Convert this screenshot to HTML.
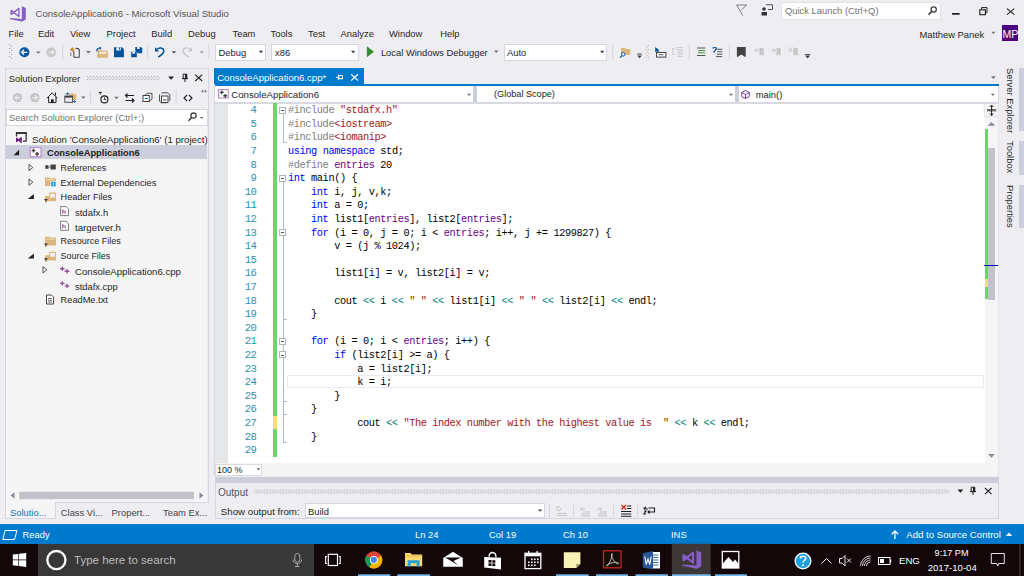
<!DOCTYPE html>
<html><head><meta charset="utf-8">
<style>
*{margin:0;padding:0;box-sizing:border-box}
html,body{width:1024px;height:576px;overflow:hidden;background:#EEEEF2;font-family:"Liberation Sans",sans-serif;font-size:9.4px;color:#1E1E1E}
.a{position:absolute}
.t{position:absolute;white-space:pre;line-height:1}
.code{position:absolute;left:288px;font-family:"Liberation Mono",monospace;font-size:10.3px;letter-spacing:-0.41px;white-space:pre;line-height:13.6px;height:13.6px;color:#000}
.ln{position:absolute;left:228px;width:28.3px;text-align:right;font-family:"Liberation Mono",monospace;font-size:10.6px;letter-spacing:-0.6px;line-height:13.6px;color:#2B91AF}
.kw{color:#0000FF}.st{color:#A31515}.pp{color:#808080}.mc{color:#6F008A}.op{color:#008080}
.tree{position:absolute;white-space:pre;line-height:14.7px;height:14.7px;font-size:9.4px;color:#1E1E1E}
</style></head><body>
<!-- TITLE BAR -->
<div class="t" style="left:35.5px;top:9px;font-size:9.6px;color:#555">ConsoleApplication6 - Microsoft Visual Studio</div>
<!-- MENU -->
<div class="t" style="left:8.5px;top:29px">File</div>
<div class="t" style="left:38px;top:29px">Edit</div>
<div class="t" style="left:70px;top:29px">View</div>
<div class="t" style="left:106.5px;top:29px">Project</div>
<div class="t" style="left:151.3px;top:29px">Build</div>
<div class="t" style="left:188px;top:29px">Debug</div>
<div class="t" style="left:232.5px;top:29px">Team</div>
<div class="t" style="left:270.5px;top:29px">Tools</div>
<div class="t" style="left:308px;top:29px">Test</div>
<div class="t" style="left:340.5px;top:29px">Analyze</div>
<div class="t" style="left:389px;top:29px">Window</div>
<div class="t" style="left:440.3px;top:29px">Help</div>
<div class="t" style="left:919.5px;top:29.5px">Matthew Panek</div>
<div class="a" style="left:1002px;top:25px;width:16.2px;height:15.8px;background:#4B0082;overflow:hidden"><div class="t" style="left:0.5px;top:3.5px;color:#fff;font-size:10.5px">MP</div></div>

<!-- QUICK LAUNCH -->
<div class="a" style="left:781px;top:1.5px;width:159.6px;height:18.7px;background:#fff;border:1px solid #E0E0E6"></div>
<div class="t" style="left:785px;top:6px;color:#717171">Quick Launch (Ctrl+Q)</div>

<!-- TOOLBAR COMBOS -->
<div class="a" style="left:214.5px;top:43.5px;width:51.8px;height:17px;background:#fff;border:1px solid #D4D6E2"></div>
<div class="t" style="left:218.5px;top:48px">Debug</div>
<div class="a" style="left:271.2px;top:43.5px;width:87.5px;height:17px;background:#fff;border:1px solid #D4D6E2"></div>
<div class="t" style="left:275px;top:48px">x86</div>
<div class="t" style="left:380.9px;top:48px">Local Windows Debugger</div>
<div class="a" style="left:503.9px;top:43.5px;width:103px;height:17px;background:#fff;border:1px solid #D4D6E2"></div>
<div class="t" style="left:507px;top:48px">Auto</div>

<!-- SOLUTION EXPLORER PANEL -->
<div class="a" style="left:4.6px;top:68.2px;width:204.4px;height:435px;border:1px solid #D4D6E2;background:#EEEEF2"></div>
<div class="t" style="left:8.8px;top:73.6px">Solution Explorer</div>
<div class="a" style="left:6px;top:109px;width:201.5px;height:17px;background:#fff;border:1px solid #D4D6E2"></div>
<div class="t" style="left:9px;top:113px;color:#717171">Search Solution Explorer (Ctrl+;)</div>
<div class="a" style="left:5.8px;top:126px;width:201.6px;height:376.4px;background:#F5F5F5"></div>
<div class="a" style="left:5.8px;top:144.5px;width:201.6px;height:14.9px;background:#CCCEDB"></div>
<div id="tree"><div class="t" style="left:32px;top:134.50px;font-size:9.68px;">Solution 'ConsoleApplication6' (1 project)</div>
<div class="t" style="left:46.9px;top:149.20px;font-weight:bold;font-size:9.33px;">ConsoleApplication6</div>
<div class="t" style="left:60.6px;top:163.90px;font-size:8.91px;">References</div>
<div class="t" style="left:60.6px;top:178.60px;font-size:9.28px;">External Dependencies</div>
<div class="t" style="left:60.6px;top:193.30px;font-size:9.09px;">Header Files</div>
<div class="t" style="left:75px;top:208.00px;font-size:9.47px;">stdafx.h</div>
<div class="t" style="left:75px;top:222.70px;font-size:9.72px;">targetver.h</div>
<div class="t" style="left:60.6px;top:237.40px;font-size:9.02px;">Resource Files</div>
<div class="t" style="left:60.6px;top:252.10px;font-size:8.95px;">Source Files</div>
<div class="t" style="left:75px;top:266.80px;font-size:9.63px;">ConsoleApplication6.cpp</div>
<div class="t" style="left:75px;top:281.50px;font-size:9.40px;">stdafx.cpp</div>
<div class="t" style="left:60.6px;top:296.20px;font-size:9.24px;">ReadMe.txt</div></div><!--endtree-->

<!-- EDITOR -->
<div class="a" style="left:214px;top:68px;width:150px;height:16px;background:#007ACC"></div>
<div class="t" style="left:217.2px;top:73px;color:#fff;font-size:9.57px">ConsoleApplication6.cpp*</div>
<div class="a" style="left:214.5px;top:84px;width:784.2px;height:2px;background:#007ACC"></div>
<div class="a" style="left:214.5px;top:86px;width:784.2px;height:16.8px;background:#fff;border-bottom:1px solid #D4D6E2"></div>
<div class="a" style="left:473.4px;top:86px;width:3.2px;height:16px;background:#CCCEDB"></div>
<div class="a" style="left:735.2px;top:86px;width:3.4px;height:16px;background:#CCCEDB"></div>
<div class="a" style="left:998px;top:86px;width:1px;height:17px;background:#D4D6E2"></div>
<div class="t" style="left:231.3px;top:90.3px;font-size:9.65px">ConsoleApplication6</div>
<div class="t" style="left:494px;top:90.3px;font-size:9.13px">(Global Scope)</div>
<div class="t" style="left:755.7px;top:90.3px">main()</div>

<div class="a" style="left:214.5px;top:102.8px;width:784.2px;height:359.8px;background:#fff"></div>
<div class="a" style="left:214.5px;top:102.8px;width:13.5px;height:359.8px;background:#E6E7E8"></div>
<div class="a" style="left:984.5px;top:102.8px;width:14px;height:373.6px;background:#F5F5F5"></div>
<div class="a" style="left:214.5px;top:462.6px;width:770px;height:13.8px;background:#F5F5F5"></div>
<div class="a" style="left:214.8px;top:463.5px;width:47.2px;height:12.2px;background:#fff;border:1px solid #DADBE3"></div>
<div class="t" style="left:217px;top:466px;font-size:9px">100 %</div>
<div class="a" style="left:214.5px;top:476.5px;width:784.2px;height:6px;background:#CCCEDB"></div>
<div class="a" style="left:214px;top:86px;width:1px;height:390.4px;background:#D4D6E2"></div>
<div class="a" style="left:214.5px;top:102px;width:784px;height:1.6px;background:#D8D9E2"></div>
<div id="code"><div class="a" style="left:287px;top:374.80px;width:697px;height:13.6px;border:1px solid #EAEAF2"></div>
<div class="ln" style="top:104.10px">4</div>
<div class="code" style="top:104.20px"><span class="pp">#include</span> <span class="st">"stdafx.h"</span></div>
<div class="ln" style="top:117.70px">5</div>
<div class="code" style="top:117.80px"><span class="pp">#include</span><span class="st">&lt;iostream&gt;</span></div>
<div class="ln" style="top:131.30px">6</div>
<div class="code" style="top:131.40px"><span class="pp">#include</span><span class="st">&lt;iomanip&gt;</span></div>
<div class="ln" style="top:144.90px">7</div>
<div class="code" style="top:145.00px"><span class="kw">using</span> <span class="kw">namespace</span> std;</div>
<div class="ln" style="top:158.50px">8</div>
<div class="code" style="top:158.60px"><span class="pp">#define</span> <span class="mc">entries</span> 20</div>
<div class="ln" style="top:172.10px">9</div>
<div class="code" style="top:172.20px"><span class="kw">int</span> main() {</div>
<div class="ln" style="top:185.70px">10</div>
<div class="code" style="top:185.80px">    <span class="kw">int</span> i, j, v,k;</div>
<div class="ln" style="top:199.30px">11</div>
<div class="code" style="top:199.40px">    <span class="kw">int</span> a = 0;</div>
<div class="ln" style="top:212.90px">12</div>
<div class="code" style="top:213.00px">    <span class="kw">int</span> list1[<span class="mc">entries</span>], list2[<span class="mc">entries</span>];</div>
<div class="ln" style="top:226.50px">13</div>
<div class="code" style="top:226.60px">    <span class="kw">for</span> (i = 0, j = 0; i &lt; <span class="mc">entries</span>; i++, j += 1299827) {</div>
<div class="ln" style="top:240.10px">14</div>
<div class="code" style="top:240.20px">        v = (j % 1024);</div>
<div class="ln" style="top:253.70px">15</div>
<div class="code" style="top:253.80px"></div>
<div class="ln" style="top:267.30px">16</div>
<div class="code" style="top:267.40px">        list1[i] = v, list2[i] = v;</div>
<div class="ln" style="top:280.90px">17</div>
<div class="code" style="top:281.00px"></div>
<div class="ln" style="top:294.50px">18</div>
<div class="code" style="top:294.60px">        cout <span class="op">&lt;&lt;</span> i <span class="op">&lt;&lt;</span> <span class="st">" "</span> <span class="op">&lt;&lt;</span> list1[i] <span class="op">&lt;&lt;</span> <span class="st">" "</span> <span class="op">&lt;&lt;</span> list2[i] <span class="op">&lt;&lt;</span> endl;</div>
<div class="ln" style="top:308.10px">19</div>
<div class="code" style="top:308.20px">    }</div>
<div class="ln" style="top:321.70px">20</div>
<div class="code" style="top:321.80px"></div>
<div class="ln" style="top:335.30px">21</div>
<div class="code" style="top:335.40px">    <span class="kw">for</span> (i = 0; i &lt; <span class="mc">entries</span>; i++) {</div>
<div class="ln" style="top:348.90px">22</div>
<div class="code" style="top:349.00px">        <span class="kw">if</span> (list2[i] &gt;= a) {</div>
<div class="ln" style="top:362.50px">23</div>
<div class="code" style="top:362.60px">            a = list2[i];</div>
<div class="ln" style="top:376.10px">24</div>
<div class="code" style="top:376.20px">            k = i;</div>
<div class="ln" style="top:389.70px">25</div>
<div class="code" style="top:389.80px">        }</div>
<div class="ln" style="top:403.30px">26</div>
<div class="code" style="top:403.40px">    }</div>
<div class="ln" style="top:416.90px">27</div>
<div class="code" style="top:417.00px">            cout <span class="op">&lt;&lt;</span> <span class="st">"The index number with the highest value is  "</span> <span class="op">&lt;&lt;</span> k <span class="op">&lt;&lt;</span> endl;</div>
<div class="ln" style="top:430.50px">28</div>
<div class="code" style="top:430.60px">    }</div>
<div class="ln" style="top:444.10px">29</div>
<div class="code" style="top:444.20px"></div>
<div class="a" style="left:273px;top:102.80px;width:4.2px;height:354.20px;background:#6BD46B"></div>
<div class="a" style="left:273px;top:415.60px;width:4.2px;height:13.60px;background:#F5E26B"></div>
<div class="a" style="left:283px;top:113.60px;width:1px;height:29.73px;background:#B8B8B8"></div><div class="a" style="left:283px;top:142.33px;width:3.5px;height:1px;background:#B8B8B8"></div>
<div class="a" style="left:283px;top:181.60px;width:1px;height:260.93px;background:#B8B8B8"></div><div class="a" style="left:283px;top:441.53px;width:3.5px;height:1px;background:#B8B8B8"></div>
<div class="a" style="left:283px;top:236.00px;width:1px;height:84.13px;background:#B8B8B8"></div><div class="a" style="left:283px;top:319.13px;width:3.5px;height:1px;background:#B8B8B8"></div>
<div class="a" style="left:283px;top:344.80px;width:1px;height:70.53px;background:#B8B8B8"></div><div class="a" style="left:283px;top:414.33px;width:3.5px;height:1px;background:#B8B8B8"></div>
<div class="a" style="left:283px;top:358.40px;width:1px;height:43.33px;background:#B8B8B8"></div><div class="a" style="left:283px;top:400.73px;width:3.5px;height:1px;background:#B8B8B8"></div>
<div class="a" style="left:279.4px;top:106.60px;width:7px;height:7px;border:1px solid #B4B4B4;background:#fff"><div class="a" style="left:1px;top:2.2px;width:3px;height:1px;background:#555"></div></div>
<div class="a" style="left:279.4px;top:174.60px;width:7px;height:7px;border:1px solid #B4B4B4;background:#fff"><div class="a" style="left:1px;top:2.2px;width:3px;height:1px;background:#555"></div></div>
<div class="a" style="left:279.4px;top:229.00px;width:7px;height:7px;border:1px solid #B4B4B4;background:#fff"><div class="a" style="left:1px;top:2.2px;width:3px;height:1px;background:#555"></div></div>
<div class="a" style="left:279.4px;top:337.80px;width:7px;height:7px;border:1px solid #B4B4B4;background:#fff"><div class="a" style="left:1px;top:2.2px;width:3px;height:1px;background:#555"></div></div>
<div class="a" style="left:279.4px;top:351.40px;width:7px;height:7px;border:1px solid #B4B4B4;background:#fff"><div class="a" style="left:1px;top:2.2px;width:3px;height:1px;background:#555"></div></div></div><!--endcode-->


<!-- EDITOR SCROLLBAR MARKERS -->
<div class="a" style="left:984.8px;top:128.8px;width:3.6px;height:170px;background:#6BD46B"></div>
<div class="a" style="left:984.8px;top:278.5px;width:3.6px;height:8.3px;background:#F5E26B"></div>
<div class="a" style="left:988.4px;top:148px;width:6.3px;height:151.7px;background:#C2C3C9"></div>
<div class="a" style="left:984px;top:265px;width:14px;height:1.3px;background:#0000D0"></div>
<div class="a" style="left:998px;top:102.8px;width:1px;height:373.6px;background:#E4E5EC"></div>

<!-- RIGHT STRIP -->
<div class="a" style="left:1019.3px;top:68px;width:4.7px;height:63px;background:#CCCEDB"></div>
<div class="a" style="left:1019.3px;top:140.8px;width:4.7px;height:33.8px;background:#CCCEDB"></div>
<div class="a" style="left:1019.3px;top:184.6px;width:4.7px;height:43.4px;background:#CCCEDB"></div>
<div class="t" style="left:1014.5px;top:68px;transform-origin:0 0;transform:rotate(90deg);font-size:9.4px;color:#1E1E1E">Server Explorer</div>
<div class="t" style="left:1014.5px;top:141px;transform-origin:0 0;transform:rotate(90deg);font-size:9.4px;color:#1E1E1E">Toolbox</div>
<div class="t" style="left:1014.5px;top:184.6px;transform-origin:0 0;transform:rotate(90deg);font-size:9.4px;color:#1E1E1E">Properties</div>

<!-- SE BOTTOM TABS -->
<div class="a" style="left:4.8px;top:503px;width:50.8px;height:16px;background:#F5F5F5;border:1px solid #D4D6E2;border-top:none"></div>
<div class="a" style="left:5.6px;top:501px;width:49px;height:3px;background:#F5F5F5"></div>
<div class="t" style="left:10px;top:507.5px;color:#0E70C0">Solutio...</div>
<div class="t" style="left:60.8px;top:507.5px;color:#444">Class Vi...</div>
<div class="t" style="left:111.6px;top:507.5px;color:#444">Propert...</div>
<div class="t" style="left:163px;top:507.5px;color:#444">Team Ex...</div>

<!-- OUTPUT -->
<div class="a" style="left:214.5px;top:482.4px;width:784.2px;height:37px;border:1px solid #D4D6E2;border-top:none"></div>
<div class="t" style="left:218px;top:487.5px;color:#555;font-size:10px">Output</div>
<div class="t" style="left:220.8px;top:506.5px;font-size:9.73px">Show output from:</div>
<div class="a" style="left:304.7px;top:502.8px;width:240px;height:15.5px;background:#fff;border:1px solid #D4D6E2"></div>
<div class="t" style="left:308px;top:507px">Build</div>

<!-- STATUS BAR -->
<div class="a" style="left:0;top:524.4px;width:1024px;height:19.4px;background:#007ACC"></div>
<div class="t" style="left:22.6px;top:529.5px;color:#fff">Ready</div>
<div class="t" style="left:415px;top:529.5px;color:#fff">Ln 24</div>
<div class="t" style="left:489px;top:529.5px;color:#fff">Col 19</div>
<div class="t" style="left:563px;top:529.5px;color:#fff">Ch 10</div>
<div class="t" style="left:671px;top:529.5px;color:#fff">INS</div>
<div class="t" style="left:906.3px;top:529.5px;color:#fff;font-size:9.62px">Add to Source Control</div>

<!-- TASKBAR -->
<div class="a" style="left:0;top:543.8px;width:1024px;height:32.2px;background:#130709"></div>
<div class="a" style="left:38px;top:543.8px;width:276px;height:32.2px;background:#383838"></div>
<div class="t" style="left:74px;top:554.5px;color:#BDBDBD;font-size:11.5px">Type here to search</div>
<svg class="a" style="left:0;top:0" width="1024" height="576" viewBox="0 0 1024 576">
<!-- VS logo title -->
<g fill="#865FC5">
<path d="M21.8,6.3 L25.8,8 L25.8,19.6 L21.8,21.6 Z"/>
<path d="M10,18.1 L22,18.9 L25.8,19.6 L21.8,21.6 L10,19.2 Z"/>
</g>
<path d="M11.2,10.4 L11.2,14.4 L18.9,8.5 L18.9,16.5 Z" fill="none" stroke="#865FC5" stroke-width="1.35" stroke-linejoin="round"/>
<!-- filter icon -->
<path d="M736.2,5 L746.7,5 L741.3,10 M736.8,5.3 L742.7,15.5" fill="none" stroke="#717171" stroke-width="0.9"/>
<!-- feedback -->
<circle cx="764" cy="9" r="1.8" fill="#333"/>
<path d="M761.5,12 L767,12 L767,15.5 L761.5,15.5 Z" fill="#333"/>
<path d="M766,4.7 L772.5,4.7 L772.5,9.5 L768,9.5" fill="none" stroke="#555" stroke-width="1"/>
<!-- quick launch search -->
<circle cx="933.7" cy="9.4" r="2.6" fill="none" stroke="#424242" stroke-width="1.3"/>
<path d="M931.8,11.4 L928.6,14.6" stroke="#424242" stroke-width="1.6"/>
<!-- window buttons -->
<rect x="952" y="13" width="7.6" height="1.7" fill="#1E1E1E"/>
<path d="M981.5,9.5 L981.5,7.6 L987,7.6 L987,12.6 L985.5,12.6" fill="none" stroke="#1E1E1E" stroke-width="1"/>
<rect x="979.8" y="9.8" width="5.6" height="4.9" fill="none" stroke="#1E1E1E" stroke-width="1.1"/>
<path d="M1007,8.6 L1014.3,14.6 M1014.3,8.6 L1007,14.6" stroke="#1E1E1E" stroke-width="1.1"/>
<!-- user dropdown -->
<path d="M991.2,31.8 L995.4,31.8 L993.3,34 Z" fill="#717171"/>
<!-- toolbar grip -->
<g fill="#A0A0A8"><rect x="9" y="44" width="1" height="1"/><rect x="11" y="46" width="1" height="1"/><rect x="9" y="48" width="1" height="1"/><rect x="11" y="50" width="1" height="1"/><rect x="9" y="52" width="1" height="1"/><rect x="11" y="54" width="1" height="1"/><rect x="9" y="56" width="1" height="1"/><rect x="11" y="58" width="1" height="1"/></g>
<!-- back/forward -->
<circle cx="24.4" cy="52.3" r="5" fill="#00539C"/>
<path d="M27.3,52.3 L21.5,52.3 M24,49.8 L21.5,52.3 L24,54.8" fill="none" stroke="#fff" stroke-width="1.3"/>
<path d="M36,51.5 L40.5,51.5 L38.25,53.8 Z" fill="#717171"/>
<circle cx="51.2" cy="52.3" r="4.8" fill="#C6C6C6"/>
<path d="M48.5,52.3 L54,52.3 M51.5,49.8 L54,52.3 L51.5,54.8" fill="none" stroke="#EEEEF2" stroke-width="1.2"/>
<rect x="62.3" y="44.5" width="0.8" height="15.5" fill="#CCCEDB"/>
<!-- new project -->
<path d="M73.8,51 L73.8,57.3 L79.3,57.3 L79.3,51" fill="none" stroke="#333" stroke-width="0.9"/>
<path d="M75.5,48.6 C77.5,47.8 79.6,48.8 79.3,51.2" fill="none" stroke="#333" stroke-width="1.1"/>
<path d="M70.9,52.5 L70.9,56.2" stroke="#555" stroke-width="0.8"/>
<path d="M72.3,47.2 L72.3,51.8 M70,49.5 L74.6,49.5 M70.7,47.9 L73.9,51.1 M73.9,47.9 L70.7,51.1" stroke="#D0821A" stroke-width="0.8"/>
<circle cx="72.3" cy="49.5" r="0.9" fill="#D0821A"/>
<path d="M85.8,51 L91,51 L88.4,53.6 Z" fill="#717171"/>
<!-- open folder -->
<path d="M97.5,49.5 L101.5,49.5 L102.5,50.5 L107.8,50.5 L107.8,57.6 L97.5,57.6 Z" fill="#DCB67A"/>
<rect x="99" y="51.5" width="7.5" height="3" fill="#EFE3CB"/>
<path d="M97.3,54 L107.8,54 L107.8,57.6 L97.3,57.6 Z" fill="#DCB67A"/>
<path d="M96.8,51.5 C96.5,49 98,47.8 100.5,48" fill="none" stroke="#00539C" stroke-width="1.1"/>
<path d="M99.6,46.6 L101.6,48 L99.6,49.4 Z" fill="#00539C"/>
<!-- save -->
<path d="M114,47.3 L122,47.3 L123.9,49.2 L123.9,57.2 L114,57.2 Z" fill="#00539C"/>
<rect x="116.3" y="47.3" width="4.6" height="3.2" fill="#EEEEF2"/><rect x="119" y="47.6" width="1.1" height="2" fill="#00539C"/>
<!-- save all -->
<path d="M135.3,47 L141,47 L142.2,48.2 L142.2,53.2 L135.3,53.2 Z" fill="#00539C"/>
<rect x="137" y="47" width="2.8" height="1.9" fill="#EEEEF2"/>
<path d="M130.9,51.6 L136,51.6 L137.1,52.7 L137.1,57.6 L130.9,57.6 Z" fill="#00539C" stroke="#EEEEF2" stroke-width="0.6"/>
<rect x="132.3" y="51.9" width="2.6" height="1.8" fill="#EEEEF2"/>
<rect x="147.3" y="44.7" width="0.8" height="14.7" fill="#CCCEDB"/>
<!-- undo/redo -->
<path d="M156.5,49.5 C159,47 163.5,47.5 163.8,50.8 C164,53 161,55.5 158.2,57.2" fill="none" stroke="#00539C" stroke-width="1.5"/>
<path d="M155,47.3 L155,51.5 L159.2,51.5 Z" fill="#00539C"/>
<path d="M171.7,51.2 L176.1,51.2 L173.9,53.6 Z" fill="#424242"/>
<path d="M190.5,49.5 C188,47 183.5,47.5 183.2,50.8 C183,53 186,55.5 188.8,57.2" fill="none" stroke="#C6C6C6" stroke-width="1.4"/>
<path d="M192,47.3 L192,51.5 L187.8,51.5 Z" fill="#C6C6C6"/>
<path d="M199.5,51.2 L204,51.2 L201.75,53.6 Z" fill="#A0A0A0"/>
<rect x="208.5" y="44.7" width="0.8" height="14.7" fill="#CCCEDB"/>
<!-- combo arrows -->
<path d="M258.8,50.8 L263.2,50.8 L261,53.2 Z" fill="#424242"/>
<path d="M351,50.8 L355.4,50.8 L353.2,53.2 Z" fill="#424242"/>
<path d="M366.9,46.3 L374,51.8 L366.9,57.3 Z" fill="#388A34"/>
<path d="M494,50.5 L498.4,50.5 L496.2,52.9 Z" fill="#717171"/>
<path d="M600,50.8 L604.4,50.8 L602.2,53.2 Z" fill="#424242"/>
<rect x="612.3" y="44.7" width="0.8" height="14.7" fill="#CCCEDB"/>
<!-- find in files -->
<path d="M621,48 L625,48 L626,49 L630.2,49 L630.2,55 L621,55 Z" fill="#DCB67A"/>
<circle cx="623.3" cy="54.3" r="1.8" fill="#fff" stroke="#00539C" stroke-width="1"/>
<path d="M622,55.6 L620,57.6" stroke="#00539C" stroke-width="1.2"/>
<rect x="637.1" y="53.6" width="4.9" height="0.9" fill="#424242"/>
<path d="M637.1,55.4 L642,55.4 L639.55,58.2 Z" fill="#424242"/>
<g fill="#B8B8C0"><rect x="645.5" y="45" width="1" height="1"/><rect x="648" y="45" width="1" height="1"/><rect x="646.7" y="47" width="1" height="1"/><rect x="645.5" y="49" width="1" height="1"/><rect x="648" y="49" width="1" height="1"/><rect x="646.7" y="51" width="1" height="1"/><rect x="645.5" y="53" width="1" height="1"/><rect x="648" y="53" width="1" height="1"/><rect x="646.7" y="55" width="1" height="1"/><rect x="645.5" y="57" width="1" height="1"/><rect x="648" y="57" width="1" height="1"/></g>
<path d="M655.2,47 L655.2,52.5 L656.6,51.2 L658.2,53 L659.2,52.4 L657.8,50.6 L659.8,50.4 Z" fill="#00539C"/>
<rect x="656.5" y="52.5" width="9.4" height="4.6" fill="#fff" stroke="#424242" stroke-width="1"/>
<rect x="658.5" y="54.3" width="5" height="0.9" fill="#424242"/>
<g fill="none" stroke="#C6C6C6" stroke-width="0.9"><path d="M674.5,48.5 L672.8,48.5 L672.8,54.5 L674.5,54.5"/><path d="M676.5,47.6 L683,47.6 M676.5,49.8 L683,49.8 M677.5,52 L683,52 M677.5,54.2 L683,54.2 M677.5,56.4 L683,56.4"/></g>
<rect x="688.8" y="44.7" width="0.8" height="14.7" fill="#CCCEDB"/>
<!-- comment -->
<g stroke-width="0.9"><path d="M697,48 L705.3,48 M697,55.5 L705.3,55.5" stroke="#424242"/><path d="M698,50.5 L705.3,50.5 M698,52.8 L705.3,52.8" stroke="#388A34"/></g>
<path d="M712.5,48.3 C714,47 715.5,47.5 716.5,48 C716,50 714.5,51 713.5,52.5" fill="none" stroke="#00539C" stroke-width="1.2"/>
<g stroke="#424242" stroke-width="0.9"><path d="M717,49.3 L722.3,49.3 M717,51.8 L722.3,51.8 M717,54.3 L722.3,54.3 M716,56.6 L722.3,56.6"/></g>
<rect x="729.2" y="44.7" width="0.8" height="14.7" fill="#CCCEDB"/>
<path d="M736.9,47 L745.7,47 L745.7,57.2 L741.3,54.6 L736.9,57.2 Z" fill="#424242"/>
<g fill="#C6C6C6"><path d="M759.5,48 L763.7,48 L763.7,56 L761.6,54.5 L759.5,56 Z"/><path d="M776.5,48 L780.7,48 L780.7,56 L778.6,54.5 L776.5,56 Z"/><path d="M793.5,48 L797.7,48 L797.7,56 L795.6,54.5 L793.5,56 Z"/></g>
<g fill="none" stroke="#C6C6C6" stroke-width="1"><path d="M759,50.3 L755,50.3 M757,48.3 L755,50.3 L757,52.3"/><path d="M771.3,50.3 L775.5,50.3 M773.5,48.3 L775.5,50.3 L773.5,52.3"/><path d="M788.3,47.3 L792.5,52 M792.5,47.3 L788.3,52"/></g>
<rect x="805" y="54" width="5.2" height="0.9" fill="#424242"/>
<path d="M805,55.6 L810.2,55.6 L807.6,58.5 Z" fill="#424242"/>
</svg>
<svg class="a" style="left:0;top:0" width="1024" height="576" viewBox="0 0 1024 576">
<!-- SE header grip -->
<defs><pattern id="grip" x="87" y="76" width="3.2" height="3" patternUnits="userSpaceOnUse"><rect x="0" y="0" width="1.1" height="1.1" fill="#9A9A9A"/><rect x="1.6" y="1.5" width="1.1" height="1.1" fill="#9A9A9A"/></pattern></defs>
<rect x="87" y="76" width="73" height="4.2" fill="url(#grip)" opacity="0.85"/>
<path d="M168.2,76.6 L174,76.6 L171.1,79.8 Z" fill="#1E1E1E"/>
<path d="M183.2,74.2 L186.8,74.2 L186.8,78.6 L183.2,78.6 Z M182,78.6 L188,78.6 M185,78.6 L185,82" fill="none" stroke="#1E1E1E" stroke-width="1"/>
<rect x="185" y="74.2" width="1.8" height="4.4" fill="#1E1E1E"/>
<path d="M195.2,74.6 L202.2,81 M202.2,74.6 L195.2,81" stroke="#1E1E1E" stroke-width="1.1"/>
<!-- SE toolbar -->
<circle cx="17.5" cy="97.6" r="4.7" fill="#C6C6C6"/>
<path d="M20,97.6 L15,97.6 M17.2,95.4 L15,97.6 L17.2,99.8" fill="none" stroke="#EEEEF2" stroke-width="1.1"/>
<circle cx="34.9" cy="97.6" r="4.7" fill="#C6C6C6"/>
<path d="M32.4,97.6 L37.4,97.6 M35.2,95.4 L37.4,97.6 L35.2,99.8" fill="none" stroke="#EEEEF2" stroke-width="1.1"/>
<path d="M47,98.2 L52.2,92.8 L57.4,98.2 M48.6,97 L48.6,102.6 L56,102.6 L56,97" fill="none" stroke="#1E1E1E" stroke-width="1"/>
<rect x="51" y="99.3" width="2.6" height="3.3" fill="#1E1E1E"/>
<rect x="55" y="92.5" width="1" height="3" fill="#1E1E1E"/>
<path d="M69,93.5 L73.5,93.5 L74.2,94.3 L76.4,94.3 L76.4,100 L69,100 Z" fill="#DCB67A"/>
<rect x="64.8" y="96" width="7.8" height="6.3" fill="#E8E8EC" stroke="#424242" stroke-width="0.9"/>
<rect x="64.8" y="96" width="7.8" height="1.6" fill="#424242"/>
<path d="M65.5,93.8 L68.5,93.8 M67,92.5 L68.5,93.8 L67,95" fill="none" stroke="#00539C" stroke-width="0.9"/>
<path d="M76,101.5 L73.5,101.5 M74.8,100.3 L73.5,101.5 L74.8,102.7" fill="none" stroke="#00539C" stroke-width="0.9"/>
<path d="M81.2,96.5 L85.6,96.5 L83.4,98.9 Z" fill="#717171"/>
<rect x="90.3" y="90" width="0.8" height="14" fill="#CCCEDB"/>
<path d="M98.8,92.4 L101.8,92.4 M100.3,92.4 L100.3,94.6" stroke="#1E1E1E" stroke-width="1"/>
<circle cx="104.4" cy="99.4" r="3.5" fill="none" stroke="#1E1E1E" stroke-width="1.1"/>
<path d="M104.4,97.4 L104.4,99.6 L106.2,99.6" fill="none" stroke="#1E1E1E" stroke-width="0.9"/>
<path d="M114.3,96.8 L118.7,96.8 L116.5,99.2 Z" fill="#717171"/>
<path d="M125.5,95.5 L134,95.5 M127.5,93.5 L125.5,95.5 L127.5,97.5 M125.5,100.5 L134,100.5 M132,98.5 L134,100.5 L132,102.5" fill="none" stroke="#1E1E1E" stroke-width="1.2"/>
<rect x="143" y="95.5" width="6.3" height="6" fill="#fff" stroke="#424242" stroke-width="1"/>
<rect x="144.8" y="98" width="2.8" height="1" fill="#00539C"/>
<path d="M145,95.5 L147,93.3 L152,93.3 L152,99 L149.3,101.5" fill="none" stroke="#424242" stroke-width="0.9"/>
<path d="M159.5,94.5 L159.5,101 L161,102.8 L166.5,102.8 M161.5,92.8 L168,92.8 L169.8,94.6 L169.8,101" fill="none" stroke="#424242" stroke-width="0.9"/>
<rect x="161.5" y="96" width="6.5" height="6.5" fill="#fff" stroke="#424242" stroke-width="1"/>
<rect x="163" y="99.5" width="3.5" height="1" fill="#424242"/>
<rect x="175.7" y="90" width="0.8" height="14" fill="#CCCEDB"/>
<path d="M187,95 L184,98 L187,101 M189,95 L192,98 L189,101" fill="none" stroke="#1E1E1E" stroke-width="1.1"/>
<path d="M201.8,89.6 L204,91.3 L201.8,93 Z M204.8,89.6 L207,91.3 L204.8,93 Z" fill="#717171"/>
<!-- search icon SE -->
<circle cx="193.5" cy="115.6" r="2.6" fill="none" stroke="#424242" stroke-width="1.3"/>
<path d="M191.6,117.6 L188.5,120.7" stroke="#424242" stroke-width="1.6"/>
<path d="M199.8,117 L203.6,117 L201.7,119 Z" fill="#717171"/>
<!-- tree icons -->
<path d="M16.5,136.5 L16.5,132.9 L26.1,132.9 L26.1,141.1 L23,141.1" fill="none" stroke="#333" stroke-width="1.3"/>
<rect x="16" y="132.2" width="10.8" height="1.8" fill="#333"/>
<path d="M16.7,138.3 L16.7,141.5 L21.2,137.8 L21.2,142.3 Z" fill="none" stroke="#68217A" stroke-width="1.3" stroke-linejoin="round"/>
<path d="M13.6,155.2 L19.1,149.7 L19.1,155.2 Z" fill="#1E1E1E"/>
<rect x="30.2" y="147.8" width="10.8" height="9" fill="#fff" stroke="#B678C4" stroke-width="1"/>
<path d="M31.6,150.6 L35.4,150.6 M33.5,148.7 L33.5,152.5 M35.2,154 L39,154 M37.1,152.1 L37.1,155.9" fill="none" stroke="#424242" stroke-width="1.4"/>
<path d="M29,164.3 L32.8,167.5 L29,170.7 Z" fill="none" stroke="#424242" stroke-width="0.9"/>
<rect x="45.3" y="165.2" width="3.2" height="3.6" fill="#424242"/><rect x="49" y="166.6" width="1" height="1" fill="#424242"/><rect x="50.5" y="164.5" width="5.3" height="5" fill="#424242"/>
<path d="M29,178.9 L32.8,182.1 L29,185.3 Z" fill="none" stroke="#424242" stroke-width="0.9"/>
<path d="M45,177.5 L49.5,177.5 L50.3,178.3 L56,178.3 L56,186 L45,186 Z" fill="#DCB67A"/>
<rect x="46.5" y="179.2" width="8" height="1" fill="#F5E1B8"/>
<rect x="50.8" y="181.3" width="5.2" height="5.5" fill="#1BA1E2" stroke="#fff" stroke-width="0.6"/>
<path d="M52.4,182.6 L54,184 L52.4,185.4" fill="none" stroke="#fff" stroke-width="0.7"/>
<!-- header files -->
<path d="M27.8,199.1 L33.9,194.1 L33.9,199.1 Z" fill="#1E1E1E"/>
<path d="M49,192.6 L56,192.6 L56,201.2 L45,201.2 L45,196 L49,196 Z" fill="#DCB67A"/>
<path d="M50,193.8 L55,193.8 L55,197.5 L50,197.5 Z" fill="#F0F0F0"/>
<path d="M44.3,199.6 L47.5,199.6 M45.9,199.6 L45.9,202.3" stroke="#1E1E1E" stroke-width="0.9"/>
<g>
<path d="M60.6,206.6 L66,206.6 L68.5,209 L68.5,215.6 L60.6,215.6 Z" fill="#fff" stroke="#717171" stroke-width="0.9"/>
<path d="M62.8,209.2 L62.8,213.8 M62.8,211.3 L65.2,211.3 L65.2,213.8" fill="none" stroke="#9B4F96" stroke-width="1"/>
<path d="M60.6,221.3 L66,221.3 L68.5,223.7 L68.5,230.3 L60.6,230.3 Z" fill="#fff" stroke="#717171" stroke-width="0.9"/>
<path d="M62.8,223.9 L62.8,228.5 M62.8,226 L65.2,226 L65.2,228.5" fill="none" stroke="#9B4F96" stroke-width="1"/>
</g>
<!-- resource folder -->
<path d="M45,236.8 L49.5,236.8 L50.3,237.6 L56,237.6 L56,245.6 L45,245.6 Z" fill="#DCB67A"/>
<rect x="46.3" y="238.6" width="8.5" height="1" fill="#F5E1B8"/>
<path d="M44.3,244 L47.5,244 M45.9,244 L45.9,246.7" stroke="#1E1E1E" stroke-width="0.9"/>
<!-- source files -->
<path d="M27.8,258.5 L33.9,253.5 L33.9,258.5 Z" fill="#1E1E1E"/>
<path d="M49,251.8 L56,251.8 L56,260.4 L45,260.4 L45,255.2 L49,255.2 Z" fill="#DCB67A"/>
<path d="M50,253 L55,253 L55,256.7 L50,256.7 Z" fill="#F0F0F0"/>
<path d="M44.3,258.8 L47.5,258.8 M45.9,258.8 L45.9,261.5" stroke="#1E1E1E" stroke-width="0.9"/>
<path d="M43,266.6 L46.8,269.8 L43,273 Z" fill="none" stroke="#424242" stroke-width="0.9"/>
<g stroke="#9B4F96" stroke-width="1.4"><path d="M60,268.7 L64.6,268.7 M62.3,266.6 L62.3,270.8 M64.6,271.2 L69.4,271.2 M67,269 L67,273.4"/>
<path d="M60,283.4 L64.6,283.4 M62.3,281.3 L62.3,285.5 M64.6,285.9 L69.4,285.9 M67,283.7 L67,288.1"/></g>
<path d="M46.5,295 L51.5,295 L53.6,297.2 L53.6,304 L46.5,304 Z" fill="#fff" stroke="#424242" stroke-width="1"/>
<path d="M48,298.5 L52,298.5 M48,300.3 L52,300.3 M48,302.1 L52,302.1" stroke="#424242" stroke-width="0.8"/>
</svg>
<svg class="a" style="left:0;top:0" width="1024" height="576" viewBox="0 0 1024 576">
<!-- tab icons -->
<path d="M336,77.4 L338.5,77.4 M338.4,74.6 L338.4,80" stroke="#fff" stroke-width="0.9" fill="none"/>
<rect x="338.9" y="75.6" width="3.6" height="3.2" fill="none" stroke="#fff" stroke-width="0.9"/>
<rect x="338.9" y="78" width="3.6" height="1" fill="#fff"/>
<path d="M351.2,74.2 L358,80.6 M358,74.2 L351.2,80.6" stroke="#fff" stroke-width="1.2"/>
<path d="M991,76.3 L995.8,76.3 L993.4,79 Z" fill="#717171"/>
<!-- nav icons -->
<rect x="218.6" y="89.6" width="9.6" height="8.4" fill="#fff" stroke="#B678C4" stroke-width="1"/>
<path d="M219.9,92.4 L223.7,92.4 M221.8,90.5 L221.8,94.3 M223.3,95.8 L227.1,95.8 M225.2,93.9 L225.2,97.7" fill="none" stroke="#424242" stroke-width="1.4"/>
<path d="M467,93.8 L471.2,93.8 L469.1,96 Z" fill="#717171"/>
<path d="M729,93.8 L733.2,93.8 L731.1,96 Z" fill="#717171"/>
<path d="M745.5,90.5 L749.3,92.5 L749.3,96.5 L745.5,98.5 L741.7,96.5 L741.7,92.5 Z M741.7,92.5 L745.5,94.5 L749.3,92.5 M745.5,94.5 L745.5,98.5" fill="none" stroke="#652D90" stroke-width="0.9"/>
<path d="M990.8,93.8 L995,93.8 L992.9,96 Z" fill="#717171"/>
<!-- splitter -->
<path d="M984.3,102.8 L984.3,116.6 L998,116.6" fill="none" stroke="#DADBE3" stroke-width="0.8"/>
<rect x="987" y="109" width="9.2" height="2.4" fill="#707070"/>
<path d="M991.6,105.5 L991.6,115" stroke="#1E1E1E" stroke-width="1"/>
<path d="M989.8,107 L991.6,105 L993.4,107 M989.8,113.5 L991.6,115.5 L993.4,113.5" fill="none" stroke="#1E1E1E" stroke-width="1"/>
<path d="M987.7,125.8 L991.45,121.9 L995.2,125.8 Z" fill="#868999"/>
<path d="M988.2,453.9 L994.7,453.9 L991.45,457.8 Z" fill="#868999"/>
<!-- zoom combo arrow -->
<path d="M256.5,468.2 L260.5,468.2 L258.5,470.4 Z" fill="#717171"/>
<!-- output header -->
<rect x="254.4" y="489.5" width="695" height="4.2" fill="url(#grip2)" opacity="0.85"/>
<defs><pattern id="grip2" x="254.4" y="489.5" width="3.2" height="3" patternUnits="userSpaceOnUse"><rect x="0" y="0" width="1.1" height="1.1" fill="#9A9A9A"/><rect x="1.6" y="1.5" width="1.1" height="1.1" fill="#9A9A9A"/></pattern></defs>
<path d="M957.5,489.6 L963.3,489.6 L960.4,492.8 Z" fill="#1E1E1E"/>
<path d="M971.2,487.2 L974.8,487.2 L974.8,491.6 L971.2,491.6 Z M970,491.6 L976,491.6 M973,491.6 L973,495" fill="none" stroke="#1E1E1E" stroke-width="1"/>
<rect x="973" y="487.2" width="1.8" height="4.4" fill="#1E1E1E"/>
<path d="M985,488 L991.5,494.2 M991.5,488 L985,494.2" stroke="#1E1E1E" stroke-width="1.1"/>
<!-- output toolbar -->
<path d="M538,509.5 L542.4,509.5 L540.2,511.8 Z" fill="#424242"/>
<rect x="549" y="504" width="0.8" height="13.5" fill="#CCCEDB"/>
<g fill="none" stroke="#C6C6C6" stroke-width="1"><path d="M558,506 L561,509 L559,511 L556.5,508.5 Z"/><path d="M557,513.5 L567,513.5 M557,515.5 L567,515.5"/></g>
<rect x="573.3" y="504" width="0.8" height="13.5" fill="#CCCEDB"/>
<g fill="none" stroke="#C6C6C6" stroke-width="1"><path d="M580.5,509 L585,509 M582.5,507 L580.5,509 L582.5,511 M583,512 L590,512 M581,514 L590,514 M581,516 L590,516"/><path d="M597,509 L601.5,509 M599.5,507 L601.5,509 L599.5,511 M600,512 L607,512 M598,514 L607,514 M598,516 L607,516"/></g>
<rect x="613.3" y="504" width="0.8" height="13.5" fill="#CCCEDB"/>
<path d="M621.5,505 L626,509.5 M626,505 L621.5,509.5" stroke="#E51400" stroke-width="1.1"/>
<path d="M627,506 L631.3,506 M627,508.5 L631.3,508.5 M621,511.5 L631.3,511.5 M621,514 L631.3,514 M621,516.3 L631.3,516.3" stroke="#1E1E1E" stroke-width="1"/>
<rect x="637.3" y="504" width="0.8" height="13.5" fill="#CCCEDB"/>
<path d="M644,509 L648,509 M644,509 L644,507.5 M646,507 L644,509 M648.5,508 L654.5,508 L654.5,512 L648,512 M649.5,510.5 L648,512 L649.5,513.5 M644,511 L646,511 L644,514 L646,514" fill="none" stroke="#1E1E1E" stroke-width="1.1"/>
<!-- SE bottom scrollbar -->
<path d="M14.5,492.3 L10.6,495.5 L14.5,498.7 Z" fill="#868999"/>
<rect x="19.2" y="491.8" width="174.8" height="7.4" fill="#C2C3C9"/>
<path d="M199.5,492.3 L203.4,495.5 L199.5,498.7 Z" fill="#868999"/>
<!-- status bar icons -->
<path d="M5,530.5 L17,530.5 L14.5,539.5 L2.8,539.5 Z" fill="none" stroke="#fff" stroke-width="1"/>
<path d="M894.9,539 L894.9,531 M891.6,534.3 L894.9,531 L898.2,534.3" fill="none" stroke="#fff" stroke-width="1.3"/>
<path d="M1005.8,536 L1012.2,536 L1009,532.6 Z" fill="#fff"/>
</svg>
<svg class="a" style="left:0;top:0" width="1024" height="576" viewBox="0 0 1024 576">
<!-- start -->
<path d="M12.8,554.6 L18.4,553.9 L18.4,559.6 L12.8,559.6 Z M19.1,553.8 L26.2,552.9 L26.2,559.6 L19.1,559.6 Z M12.8,560.3 L18.4,560.3 L18.4,566 L12.8,565.3 Z M19.1,560.3 L26.2,560.3 L26.2,567 L19.1,566.1 Z" fill="#fff"/>
<circle cx="56.4" cy="560.1" r="9.1" fill="none" stroke="#fff" stroke-width="2.3"/>
<!-- mic -->
<rect x="294.8" y="553.5" width="5" height="8.5" rx="2.5" fill="none" stroke="#A8A8A8" stroke-width="1"/>
<path d="M293,559.5 C293,565 301.6,565 301.6,559.5 M297.3,563.5 L297.3,566.5 M295,566.5 L299.6,566.5" fill="none" stroke="#A8A8A8" stroke-width="1"/>
<!-- task view -->
<rect x="328.3" y="554.3" width="9.2" height="11.2" fill="none" stroke="#fff" stroke-width="1.2"/>
<path d="M327,556.5 L325.6,556.5 L325.6,563.5 L327,563.5 M338.8,556.5 L340.2,556.5 L340.2,563.5 L338.8,563.5" fill="none" stroke="#fff" stroke-width="1.1"/>
<!-- chrome -->
<circle cx="373.8" cy="559.8" r="8.6" fill="#DB4437"/>
<path d="M373.8,559.8 L366.35,555.5 A8.6,8.6 0 0 0 369.5,567.25 Z" fill="#0F9D58"/>
<path d="M373.8,559.8 L369.5,567.25 A8.6,8.6 0 0 0 382.4,559.8 L381.25,555.5 Z" fill="#F4B400"/>
<path d="M373.8,559.8 L366.35,555.5 L381.25,555.5 Z" fill="#DB4437"/>
<circle cx="373.8" cy="559.8" r="3.9" fill="#fff"/>
<circle cx="373.8" cy="559.8" r="3.1" fill="#4285F4"/>
<!-- explorer -->
<path d="M405,553 L410.5,553 L412,554.5 L422.2,554.5 L422.2,566.3 L405,566.3 Z" fill="#F8D775"/>
<rect x="405" y="555.5" width="17.2" height="1" fill="#E8B84A"/>
<path d="M407.6,566.5 L407.6,560.3 L419.6,560.3 L419.6,566.5 L416.6,566.5 L416.6,563.3 L410.6,563.3 L410.6,566.5 Z" fill="#2A9FD8"/>
<!-- mail -->
<path d="M443.2,558 L453,551.8 L462.8,558 L462.8,566.8 L443.2,566.8 Z" fill="#fff"/>
<path d="M445,557.5 L461,557.5 L453.5,561 L458.5,565.5 L452,561.5 Z" fill="#130709"/>
<!-- store -->
<path d="M484.2,557 L501,557.8 L501,569.5 L484.2,567.5 Z" fill="#fff"/>
<path d="M489,556.8 C489,551 496,551 496,557.3" fill="none" stroke="#fff" stroke-width="1.3"/>
<rect x="488.5" y="560" width="3" height="2.6" fill="#130709"/><rect x="492.3" y="560.2" width="3" height="2.6" fill="#130709"/><rect x="488.5" y="563.3" width="3" height="2.6" fill="#130709"/><rect x="492.3" y="563.5" width="3" height="2.6" fill="#130709"/>
<!-- calendar -->
<rect x="525" y="553.3" width="15.8" height="15.3" fill="none" stroke="#fff" stroke-width="1.3"/>
<rect x="525" y="553.3" width="15.8" height="3" fill="#fff"/>
<rect x="528" y="551" width="1.3" height="3" fill="#fff"/><rect x="536.5" y="551" width="1.3" height="3" fill="#fff"/>
<g fill="#fff"><rect x="531" y="558.5" width="1.6" height="1.6"/><rect x="534" y="558.5" width="1.6" height="1.6"/><rect x="537" y="558.5" width="1.6" height="1.6"/><rect x="528" y="561.5" width="1.6" height="1.6"/><rect x="531" y="561.5" width="1.6" height="1.6"/><rect x="534" y="561.5" width="1.6" height="1.6"/><rect x="537" y="561.5" width="1.6" height="1.6"/><rect x="528" y="564.5" width="1.6" height="1.6"/><rect x="531" y="564.5" width="1.6" height="1.6"/><rect x="534" y="564.5" width="1.6" height="1.6"/></g>
<!-- sticky notes -->
<path d="M563.8,552.2 L580.4,552.2 L580.4,564 L576.3,568 L563.8,568 Z" fill="#F7F1B5"/>
<path d="M580.4,564 L576.3,564 L576.3,568 Z" fill="#9C9566"/>
<!-- acrobat -->
<rect x="603.5" y="550.8" width="17.5" height="17" fill="#1A0A0A" stroke="#D4261C" stroke-width="1.2"/>
<path d="M612,553.5 C610.5,555 612,559 615.5,562.5 C617,564 618.5,564.5 618.5,563.5 C618.5,562 614,562 609.5,563.5 C607,564.5 606,566 607,566 C608.5,566 611,560 612,556 C612.3,554.5 612.3,553.5 612,553.5 Z" fill="none" stroke="#E0E0E0" stroke-width="0.8"/>
<!-- word -->
<path d="M651,552 L660,552 L660,568.5 L651,568.5 Z" fill="#fff"/>
<path d="M652.5,555 L658.5,555 M652.5,557.5 L658.5,557.5 M652.5,560 L658.5,560 M652.5,562.5 L658.5,562.5 M652.5,565 L658.5,565" stroke="#2B579A" stroke-width="0.9"/>
<path d="M642.8,553.2 L653,551 L653,569.5 L642.8,567.4 Z" fill="#2B579A"/>
<path d="M644.8,556.5 L646.2,564.5 L648,559 L649.8,564.5 L651.2,556.5" fill="none" stroke="#fff" stroke-width="1.1"/>
<!-- VS highlighted -->
<rect x="671.8" y="543.8" width="38.9" height="32.2" fill="#3E3737"/>
<g transform="translate(670.3,542.8) scale(1.2)">
<path d="M21.8,6.3 L25.8,8 L25.8,19.6 L21.8,21.6 Z" fill="#865FC5"/>
<path d="M10,18.1 L22,18.9 L25.8,19.6 L21.8,21.6 L10,19.2 Z" fill="#865FC5"/>
<path d="M11,10.3 L11,14.6 L19,8.4 L19,16.6 Z" fill="none" stroke="#865FC5" stroke-width="1.7" stroke-linejoin="round"/>
</g>
<!-- photos -->
<rect x="722.3" y="551.5" width="16.5" height="16.5" fill="none" stroke="#fff" stroke-width="1.3"/>
<path d="M722.3,564 L728.5,557 L733,562 L735,559.5 L738.8,564 L738.8,568 L722.3,568 Z" fill="#fff"/>
<!-- underlines -->
<g fill="#76B9ED"><rect x="358" y="574.3" width="32.2" height="1.7"/><rect x="397.3" y="574.3" width="32.7" height="1.7"/><rect x="556" y="574.3" width="32.6" height="1.7"/><rect x="596" y="574.3" width="32" height="1.7"/><rect x="635.5" y="574.3" width="32.5" height="1.7"/><rect x="672" y="574.3" width="38.7" height="1.7"/><rect x="715" y="574.3" width="32" height="1.7"/></g>
<!-- tray -->
<circle cx="803" cy="561" r="8.5" fill="#fff"/>
<circle cx="803" cy="561" r="7.2" fill="#1BA1E2"/>
<path d="M800.3,558.5 C800.3,555.5 805.7,555.5 805.7,558.5 C805.7,560.5 803,560.5 803,562.8" fill="none" stroke="#fff" stroke-width="1.6"/>
<circle cx="803" cy="565.3" r="1" fill="#fff"/>
<path d="M821.5,563.5 L826.5,558.5 L831.5,563.5" fill="none" stroke="#fff" stroke-width="1"/>
<path d="M839.5,558.5 L842,558.5 L845,555.5 L845,566 L842,563 L839.5,563 Z" fill="none" stroke="#fff" stroke-width="0.9"/>
<path d="M847,558.5 L851,562.5 M851,558.5 L847,562.5" stroke="#fff" stroke-width="0.9"/>
<path d="M860.5,566 A10,10 0 0 1 870.5,556 M862.5,566 A8,8 0 0 1 870.5,558 M864.5,566 A6,6 0 0 1 870.5,560 M866.5,566 A4,4 0 0 1 870.5,562" fill="none" stroke="#fff" stroke-width="0.8"/>
<rect x="878.5" y="557.5" width="11.5" height="7" fill="none" stroke="#fff" stroke-width="1"/>
<rect x="890" y="559.5" width="1.2" height="3" fill="#fff"/>
<rect x="880" y="559" width="4" height="4" fill="#fff"/>
<path d="M991.3,553.5 L1004.3,553.5 L1004.3,563.5 L998.5,563.5 L997.8,566 L996.5,563.5 L991.3,563.5 Z" fill="none" stroke="#fff" stroke-width="0.9"/>
<rect x="1019.5" y="543.8" width="0.8" height="32.2" fill="#555"/>
</svg>
<div class="t" style="left:899px;top:556.3px;color:#fff;font-size:9.6px">ENG</div>
<div class="t" style="left:934.6px;top:548.5px;color:#fff;font-size:9.1px">9:17 PM</div>
<div class="t" style="left:927.7px;top:563px;color:#fff;font-size:9.6px">2017-10-04</div>
</body></html>
